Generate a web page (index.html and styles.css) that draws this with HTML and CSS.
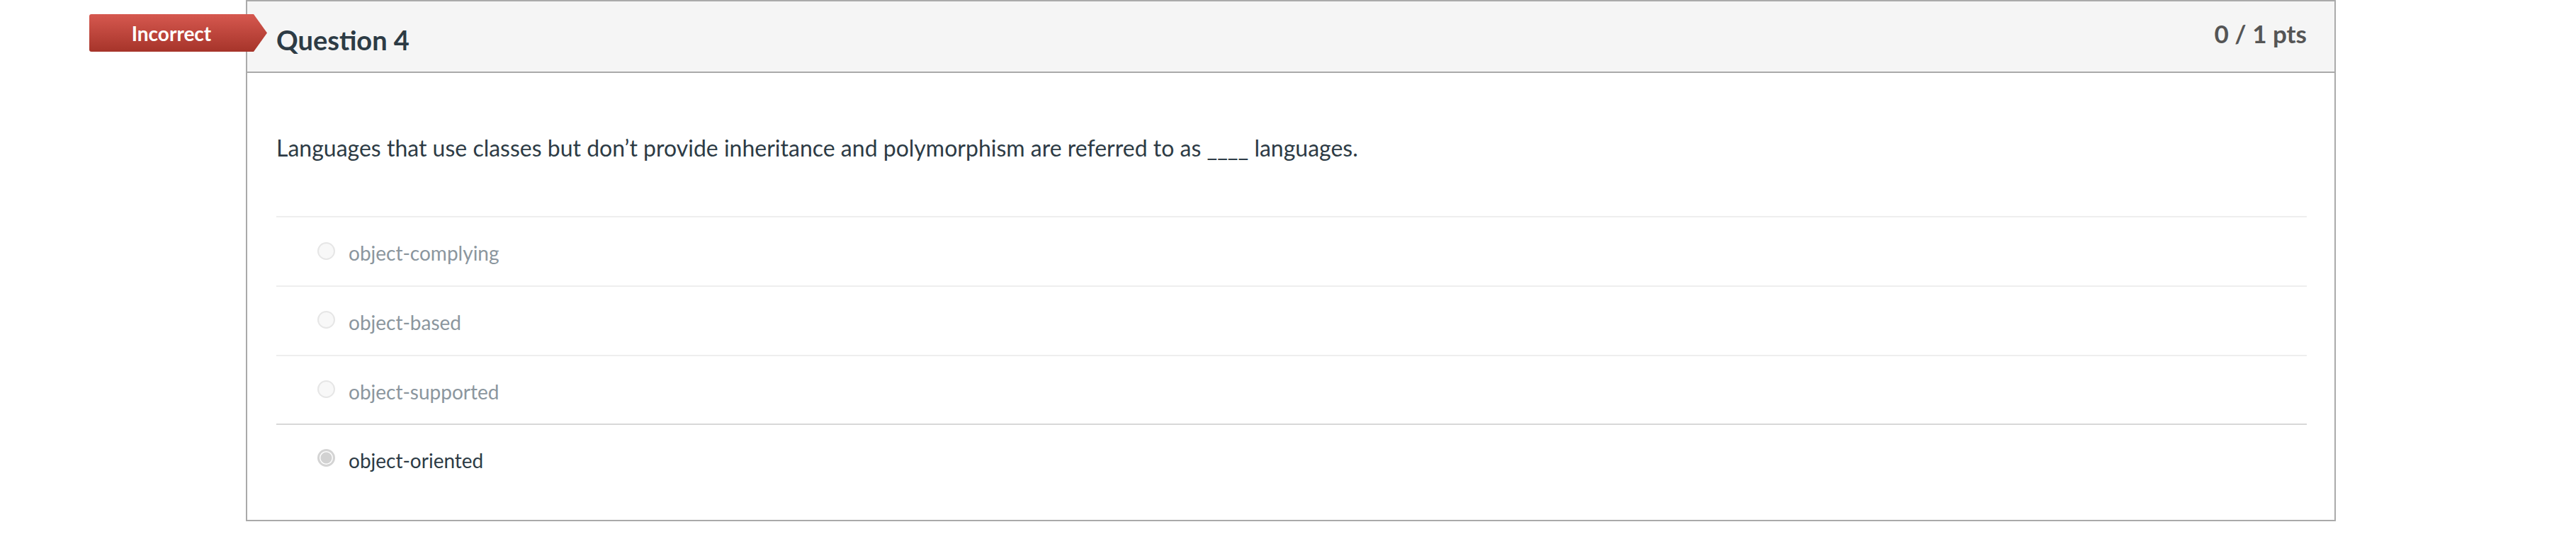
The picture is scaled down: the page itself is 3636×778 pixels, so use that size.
FILE: index.html
```html
<!DOCTYPE html>
<html lang="en">
<head>
<meta charset="utf-8">
<title>Question 4</title>
<link rel="stylesheet" href="styles.css">
</head>
<body>
<div class="question">
  <div class="badge">Incorrect</div>
  <div class="q-header">
    <h2 class="q-title">Question 4</h2>
    <div class="q-points">0 / 1 pts</div>
  </div>
  <div class="q-body">
    <p class="q-text">Languages that use classes but don’t provide inheritance and polymorphism are referred to as ____ languages.</p>
    <div class="answers">
      <div class="answer"><span class="radio"></span><span class="label">object-complying</span></div>
      <div class="answer"><span class="radio"></span><span class="label">object-based</span></div>
      <div class="answer"><span class="radio"></span><span class="label">object-supported</span></div>
      <div class="answer selected"><span class="radio checked"></span><span class="label">object-oriented</span></div>
    </div>
  </div>
</div>
</body>
</html>
```

FILE: styles.css
```css
* { box-sizing: border-box; }
html, body { margin: 0; padding: 0; background: #fff; }
body { font-family: Lato, "Open Sans", "Liberation Sans", sans-serif; color: #2d3b45; }

.question {
  position: relative;
  margin-left: 347px;
  width: 2950px;
  border: 2px solid #aaaaaa;
  background: #fff;
}

.badge {
  position: absolute;
  left: -223px;
  top: 18px;
  width: 251px;
  height: 53px;
  padding-right: 19px;
  display: flex;
  align-items: center;
  justify-content: center;
  color: #fff;
  font-size: 28px;
  font-weight: 700;
  background: linear-gradient(#d6584f, #a6342a);
  border-radius: 3px 0 0 3px;
  clip-path: polygon(0 0, calc(100% - 19px) 0, 100% 50%, calc(100% - 19px) 100%, 0 100%);
}

.q-header {
  height: 101px;
  background: #f5f5f5;
  border-bottom: 2px solid #aaaaaa;
  display: flex;
  justify-content: space-between;
  align-items: flex-start;
  padding: 0 39px 0 41px;
}
.q-title {
  margin: 32px 0 0;
  font-size: 38px;
  line-height: 1.2;
  font-weight: 700;
  color: #2d3b45;
}
.q-points {
  margin-top: 24px;
  font-size: 35px;
  line-height: 1.2;
  font-weight: 700;
  color: #555555;
}

.q-body { padding: 0 39px 38px 41px; }
.q-text {
  margin: 87px 0 0;
  padding-bottom: 77px;
  font-size: 32px;
  line-height: 1.2;
}

.answer {
  display: flex;
  align-items: center;
  border-top: 2px solid #eeeeee;
  padding: 34px 0 28px 58px;
  font-size: 28px;
  line-height: 1.2;
  color: #8b969e;
}
.answer.selected { border-top-color: #d8d8d8; color: #2d3b45; }
.radio {
  width: 25px;
  height: 25px;
  flex: none;
  margin-right: 19px;
  margin-top: -8px;
  border-radius: 50%;
  border: 2px solid #e6e6e6;
  background: #f8f8f8;
}
.radio.checked {
  border: 3px solid #d4d4d4;
  background: radial-gradient(circle, #d2d2d2 0 7.5px, #fff 8.5px);
}
```
